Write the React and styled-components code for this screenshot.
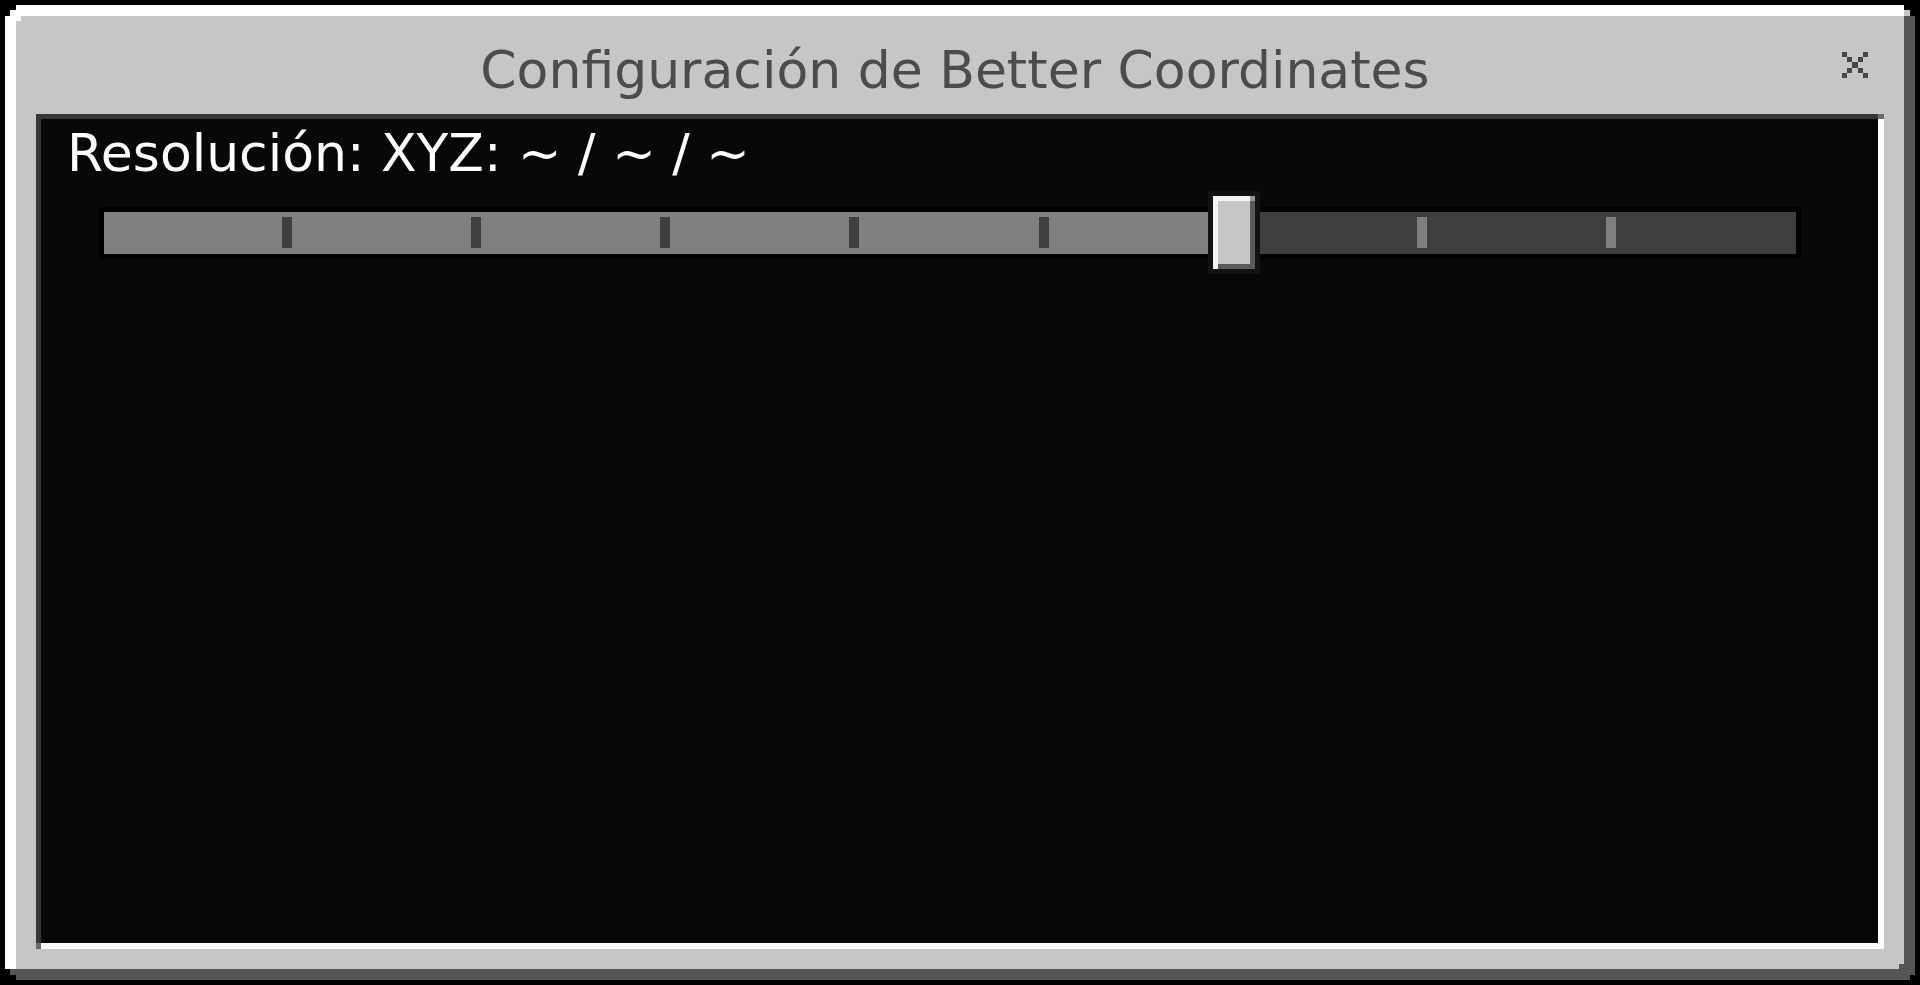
import React, {useState} from "react";
import styled, {createGlobalStyle} from "styled-components";

const FACE = "#c6c6c6";
const LIGHT = "#ffffff";
const SHADE = "#565656";
const INK = "#4c4c4c";
const DARK = "#3f3f3f";
const MID = "#7f7f7f";
const PANEL = "#080808";

const STEPS = 9;

const GlobalStyle = createGlobalStyle`
  * {
    box-sizing: border-box;
  }
  body {
    margin: 0;
    background: #000;
    font-family: "DejaVu Sans", sans-serif;
  }
`;

const Screen = styled.div`
  min-height: 100vh;
  padding: 5px;
  display: flex;
`;

// raised frame: light on the top and left, shaded on the right and bottom, stepped corners
const Dialog = styled.main`
  flex: 1;
  display: flex;
  flex-direction: column;
  padding: 11px;
  background:
    linear-gradient(${LIGHT}, ${LIGHT}) 11px 11px / 5px 5px no-repeat,
    linear-gradient(${SHADE}, ${SHADE}) right 11px bottom 11px / 5px 5px no-repeat,
    linear-gradient(${FACE}, ${FACE}) right 0 top 0 / 11px 11px no-repeat,
    linear-gradient(${SHADE}, ${SHADE}) left 0 bottom 0 / 100% 11px no-repeat,
    linear-gradient(${LIGHT}, ${LIGHT}) left 0 top 0 / 100% 11px no-repeat,
    linear-gradient(${LIGHT}, ${LIGHT}) left 0 top 0 / 11px 100% no-repeat,
    linear-gradient(${SHADE}, ${SHADE}) right 0 top 0 / 11px 100% no-repeat,
    ${FACE};
  clip-path: polygon(
    11px 0, calc(100% - 11px) 0, calc(100% - 11px) 5px, calc(100% - 5px) 5px,
    calc(100% - 5px) 11px, 100% 11px, 100% calc(100% - 5px),
    calc(100% - 5px) calc(100% - 5px), calc(100% - 5px) 100%, 11px 100%,
    11px calc(100% - 5px), 5px calc(100% - 5px), 5px calc(100% - 11px),
    0 calc(100% - 11px), 0 11px, 5px 11px, 5px 5px, 11px 5px
  );
`;

const Header = styled.header`
  display: grid;
  grid-template-columns: 1fr auto 1fr;
  align-items: start;
  height: 98px;
  padding: 25px 36px 0 26px;
`;

const Title = styled.h1`
  grid-column: 2;
  margin: 0;
  color: ${INK};
  font-size: 52px;
  font-weight: 400;
  line-height: 58px;
  white-space: nowrap;
`;

const CloseButton = styled.button`
  justify-self: end;
  display: flex;
  margin-top: 11px;
  padding: 0;
  border: 0;
  background: none;
  color: #464646;
  cursor: pointer;
`;

// sunken panel
const Panel = styled.section`
  flex: 1;
  margin: 0 20px 20px;
  padding: 10px 83px 11px 31px;
  background:
    linear-gradient(#6b6b6b, #6b6b6b) right 0 top 0 / 6px 5px no-repeat,
    linear-gradient(#6b6b6b, #6b6b6b) left 0 bottom 0 / 5px 6px no-repeat,
    linear-gradient(#373737, #373737) left 0 top 0 / 100% 5px no-repeat,
    linear-gradient(#373737, #373737) left 0 top 0 / 5px 100% no-repeat,
    linear-gradient(${LIGHT}, ${LIGHT}) right 0 top 0 / 6px 100% no-repeat,
    linear-gradient(${LIGHT}, ${LIGHT}) left 0 bottom 0 / 100% 6px no-repeat,
    ${PANEL};
`;

const Label = styled.label`
  display: block;
  margin-bottom: 9px;
  color: #fff;
  font-size: 52px;
  line-height: 58px;
  white-space: pre;
`;

const Slider = styled.div`
  display: grid;
  align-items: center;
  margin-left: 32px;

  > * {
    grid-area: 1 / 1;
  }
`;

const Rail = styled.div`
  height: 52px;
  border: 5px solid #000;
  background: ${DARK};
`;

const Fill = styled.div`
  height: 100%;
  background: ${MID};
`;

const Ticks = styled.div`
  display: grid;
  grid-template-columns: repeat(${STEPS}, 1fr);
`;

const Tick = styled.span`
  justify-self: end;
  width: 10px;
  height: 31px;
  margin-right: -4px;
  background: ${props => props.$passed ? DARK : MID};
`;

const Range = styled.input`
  appearance: none;
  height: 83px;
  margin: 0 -26px;
  background: none;
  cursor: pointer;

  &::-webkit-slider-thumb {
    appearance: none;
    width: 52px;
    height: 83px;
    border: 5px solid #121212;
    background:
      linear-gradient(#999, #999) right 0 top 0 / 5px 5px no-repeat,
      linear-gradient(#f4f4f4, #f4f4f4) left 0 top 0 / 100% 5px no-repeat,
      linear-gradient(#f4f4f4, #f4f4f4) left 0 top 0 / 5px 100% no-repeat,
      linear-gradient(#5a5a5a, #5a5a5a) right 0 top 0 / 5px 100% no-repeat,
      linear-gradient(#5a5a5a, #5a5a5a) left 0 bottom 0 / 100% 5px no-repeat,
      ${FACE};
    background-origin: padding-box;
    background-clip: border-box;
  }
`;

const CloseIcon = () => (
    <svg width="26" height="26" viewBox="0 0 5 5" fill="currentColor" shapeRendering="crispEdges" aria-hidden="true">
        <path d="M0 0h1v1H0zM4 0h1v1H4zM1 1h1v1H1zM3 1h1v1H3zM2 2h1v1H2zM1 3h1v1H1zM3 3h1v1H3zM0 4h1v1H0zM4 4h1v1H4z"/>
    </svg>
);

const App = () => {
    const [step, setStep] = useState(6);

    return (
        <Screen>
            <GlobalStyle/>
            <Dialog>
                <Header>
                    <Title>Configuración de Better Coordinates</Title>
                    <CloseButton type="button" aria-label="Cerrar">
                        <CloseIcon/>
                    </CloseButton>
                </Header>
                <Panel>
                    <Label htmlFor="resolution">Resolución: XYZ: ~ / ~ / ~</Label>
                    <Slider>
                        <Rail>
                            <Fill style={{width: `${step / STEPS * 100}%`}}/>
                        </Rail>
                        <Ticks>
                            {Array.from({length: STEPS - 1}, (_, i) => (
                                <Tick key={i} $passed={i + 1 <= step}/>
                            ))}
                        </Ticks>
                        <Range
                            id="resolution"
                            type="range"
                            min="0"
                            max={STEPS}
                            value={step}
                            onChange={e => setStep(Number(e.target.value))}
                        />
                    </Slider>
                </Panel>
            </Dialog>
        </Screen>
    );
};

export default App;
